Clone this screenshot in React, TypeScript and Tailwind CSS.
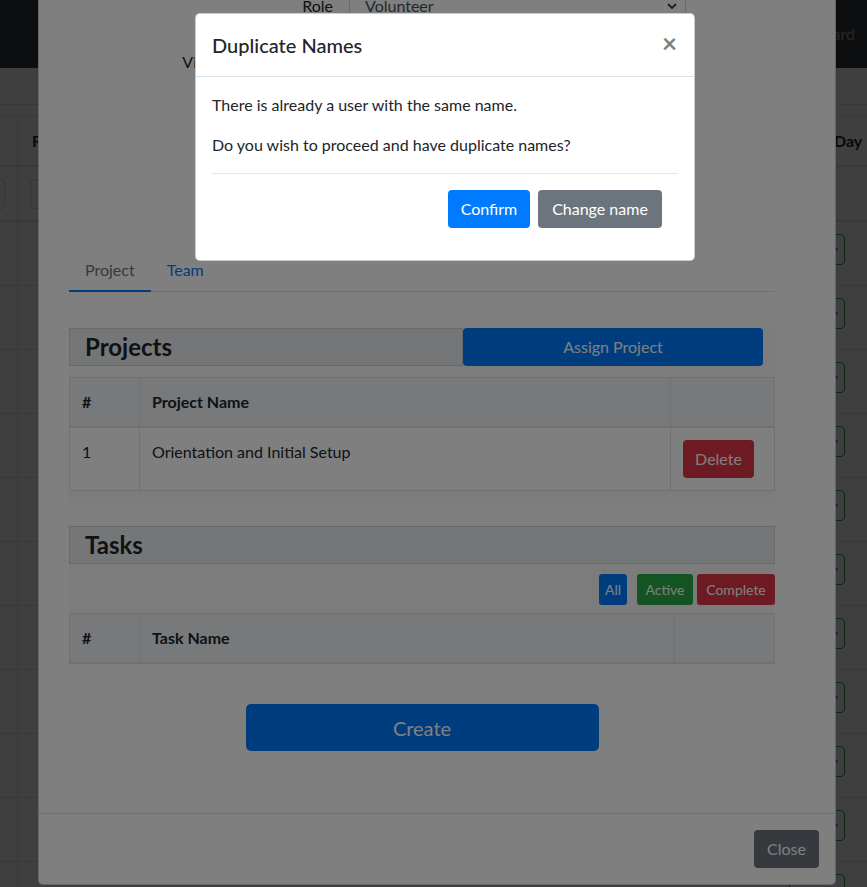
const filterRows = 1;
const dataRows = Array.from({ length: 11 }, (_, i) => i);

function PageBehind() {
  return (
    <div className="flex flex-col bg-white">
      <nav className="flex h-[68px] items-center justify-end bg-[#343a40] pr-[12px]">
        <span className="text-[16px] text-white/50">Dashboard</span>
      </nav>
      <div className="h-[37px] border-b border-[#dee2e6]" />
      <div className="mt-[11px] border-t border-[#dee2e6]">
        {/* column titles */}
        <div className="flex h-[50px] items-center border-b-2 border-[#dee2e6] font-bold text-[#212529]">
          <div className="h-full w-[18px] border-r border-[#dee2e6]" />
          <div className="flex-1 pl-[14px]">Role</div>
          <div className="w-[45px] pl-[12px]">Day</div>
        </div>
        {/* filter inputs */}
        {Array.from({ length: filterRows }).map((_, i) => (
          <div key={i} className="flex h-[55px] items-center border-b-2 border-[#dee2e6]">
            <div className="flex h-full w-[18px] items-center border-r border-[#dee2e6]">
              <div className="-ml-[20px] h-[30px] w-[25px] rounded-[4px] border border-[#ced4da]" />
            </div>
            <div className="flex-1 pl-[12px]">
              <div className="h-[30px] w-[120px] rounded-[4px] border border-[#ced4da]" />
            </div>
          </div>
        ))}
        {dataRows.map((i) => (
          <div key={i} className="flex h-[64px] items-start border-b border-[#dee2e6]">
            <div className="h-full w-[18px] border-r border-[#dee2e6]" />
            <div className="flex-1" />
            <div className="mr-[22px] mt-[12px] flex h-[31px] w-[56px] items-center justify-end rounded-[4px] border border-[#28a745] pr-[6px] text-[10px] text-[#28a745]">
              ▾
            </div>
          </div>
        ))}
      </div>
    </div>
  );
}

function FormRow({ label, value, select }: { label: string; value?: string; select?: boolean }) {
  return (
    <div className="flex h-[38px] items-center">
      <label className="w-[280px] pr-[16px] text-right text-[16px] text-[#212529]">{label}</label>
      <div className="relative flex h-[38px] w-[337px] items-center rounded-[4px] border border-[#ced4da] px-[15px] text-[16px] text-[#495057]">
        {value}
        {select && (
          <svg className="absolute right-[8px] top-[14px]" width="10" height="8" viewBox="0 0 10 8">
            <path d="M1 2l4 4 4-4" fill="none" stroke="#343a40" strokeWidth="1.8" />
          </svg>
        )}
      </div>
    </div>
  );
}

function CreateUserModal() {
  return (
    <div className="absolute left-[38px] top-[-40px] flex h-[925px] w-[798px] flex-col rounded-[5px] border border-black/20 bg-white">
      <div className="flex w-[736px] flex-1 flex-col pl-[30px] pt-[26px]">
        <FormRow label="Role" value="Volunteer" select />
        <div className="mt-[18px]">
          <FormRow label="Visible to other Users" />
        </div>
        <div className="mt-[18px]">
          <FormRow label="Email" />
        </div>
        <div className="mt-[18px]">
          <FormRow label="Phone" />
        </div>

        <nav className="mt-[57px] flex border-b border-[#dee2e6] text-[16px]">
          <span className="-mb-px border-b-2 border-[#007bff] px-[16px] py-[8px] leading-[24px] text-[#6c757d]">
            Project
          </span>
          <span className="-mb-px border-b-2 border-transparent px-[16px] py-[8px] leading-[24px] text-[#007bff]">
            Team
          </span>
        </nav>

        {/* projects */}
        <div className="mt-[36px] bg-[#f8f9fa] pb-[14px]">
          <div className="flex h-[38px]">
            <div className="flex w-[394px] items-center border border-[#ced4da] bg-[#e9ecef] pl-[15px]">
              <h3 className="text-[24px] font-bold leading-none text-[#212529]">Projects</h3>
            </div>
            <button className="w-[300px] rounded-[4px] bg-[#007bff] text-[16px] text-white">Assign Project</button>
          </div>
          <table className="mt-[11px] w-full border-collapse text-left text-[16px] text-[#212529]">
            <thead>
              <tr className="bg-[#eef2f6]">
                <th className="w-[70px] border border-b-2 border-[#dee2e6] p-[12px] leading-[24px]">#</th>
                <th className="border border-b-2 border-[#dee2e6] p-[12px] leading-[24px]">Project Name</th>
                <th className="w-[104px] border border-b-2 border-[#dee2e6] p-[12px]" />
              </tr>
            </thead>
            <tbody>
              <tr className="bg-white">
                <td className="border border-[#dee2e6] p-[12px] align-top leading-[24px]">1</td>
                <td className="border border-[#dee2e6] p-[12px] align-top leading-[24px]">Orientation and Initial Setup</td>
                <td className="border border-[#dee2e6] p-[12px] align-top">
                  <button className="h-[38px] w-[71px] rounded-[4px] bg-[#dc3545] text-[16px] text-white">Delete</button>
                </td>
              </tr>
            </tbody>
          </table>
        </div>

        {/* tasks */}
        <div className="mt-[21px] bg-[#f8f9fa]">
          <div className="flex h-[38px] items-center border border-[#ced4da] bg-[#e9ecef] pl-[15px]">
            <h3 className="text-[24px] font-bold leading-none text-[#212529]">Tasks</h3>
          </div>
          <div className="mt-[10px] flex justify-end text-[14px] text-white">
            <button className="h-[31px] w-[28px] rounded-[3px] bg-[#007bff]">All</button>
            <button className="ml-[10px] h-[31px] w-[56px] rounded-[3px] bg-[#28a745]">Active</button>
            <button className="ml-[4px] h-[31px] w-[78px] rounded-[3px] bg-[#dc3545]">Complete</button>
          </div>
          <table className="mt-[8px] w-full border-collapse text-left text-[16px] text-[#212529]">
            <thead>
              <tr className="bg-[#eef2f6]">
                <th className="w-[70px] border border-b-2 border-[#dee2e6] p-[12px] leading-[24px]">#</th>
                <th className="border border-b-2 border-[#dee2e6] p-[12px] leading-[24px]">Task Name</th>
                <th className="w-[100px] border border-b-2 border-[#dee2e6] p-[12px]" />
              </tr>
            </thead>
          </table>
        </div>

        <button className="mx-auto mt-[40px] h-[47px] w-[353px] rounded-[5px] bg-[#007bff] text-[20px] text-white">
          Create
        </button>
      </div>

      <div className="flex justify-end border-t border-[#dee2e6] p-[16px]">
        <button className="h-[38px] w-[65px] rounded-[4px] bg-[#6c757d] text-[16px] text-white">Close</button>
      </div>
    </div>
  );
}

function DuplicateNamesModal() {
  return (
    <div className="absolute left-[195px] top-[13px] w-[500px] rounded-[5px] border border-black/20 bg-white text-[#212529]">
      <div className="flex items-start justify-between border-b border-[#dee2e6] p-[16px]">
        <h5 className="text-[20px] font-medium leading-[30px]">Duplicate Names</h5>
        <span className="-mt-[2px] mr-[1px] text-[26px] font-bold leading-[30px] text-black opacity-50 [text-shadow:0_1px_0_#fff]">
          ×
        </span>
      </div>
      <div className="p-[16px] text-[16px] leading-[24px]">
        <p className="mb-[16px]">There is already a user with the same name.</p>
        <p className="mb-[16px]">Do you wish to proceed and have duplicate names?</p>
        <hr className="mb-[16px] border-t border-black/10" />
        <div className="mb-[16px] flex justify-end gap-[8px] pr-[16px]">
          <button className="h-[38px] w-[82px] rounded-[4px] bg-[#007bff] text-white">Confirm</button>
          <button className="h-[38px] w-[124px] rounded-[4px] bg-[#6c757d] text-white">Change name</button>
        </div>
      </div>
    </div>
  );
}

export default function App() {
  return (
    <div className="relative h-[887px] w-full overflow-hidden bg-white font-['Lato',sans-serif]">
      <PageBehind />
      <div className="absolute inset-0 bg-black/50" />
      <CreateUserModal />
      <div className="absolute inset-0 bg-black/50" />
      <DuplicateNamesModal />
    </div>
  );
}
